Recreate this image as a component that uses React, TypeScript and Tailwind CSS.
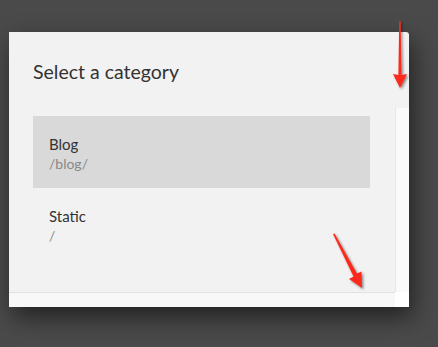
import React from "react";

const items = [
  { name: "Blog", path: "/blog/", active: true },
  { name: "Static", path: "/", active: false },
];

function Arrows() {
  return (
    <svg
      className="pointer-events-none absolute left-0 top-0"
      width="438"
      height="347"
      viewBox="0 0 438 347"
    >
      <defs>
        <filter id="sh" x="-50%" y="-50%" width="200%" height="200%">
          <feDropShadow dx="1.5" dy="1.5" stdDeviation="1.2" floodColor="#000" floodOpacity="0.45" />
        </filter>
      </defs>
      <g fill="#fb2a1c" filter="url(#sh)">
        <polygon points="399.2,21 400.6,21 401.6,75 407,74 400,88 393,74 398.4,75" />
        <polygon points="333,234 334.6,233.4 357,273.5 361.5,271.5 362,288 349,279 353.5,276.5" />
      </g>
    </svg>
  );
}

export default function App() {
  return (
    <div
      className="relative h-[347px] w-[438px] overflow-hidden bg-[#4a4a4a]"
      style={{ fontFamily: "Lato, 'Noto Sans', sans-serif" }}
    >
      <div className="ml-[9px] mt-[32px] flex h-[275px] w-[400px] flex-col rounded-tr-[3px] bg-[#f2f2f2] shadow-[4px_10px_24px_rgba(0,0,0,0.55)]">
        <div className="flex h-[76px] shrink-0 items-center pl-6 pt-[3px]">
          <h2 className="text-[19.5px] leading-none text-[#333]">Select a category</h2>
        </div>
        <div className="flex min-h-0 flex-1">
          <div className="flex-1 pl-6 pr-[25px] pt-2">
            {items.map((it) => (
              <div
                key={it.name}
                className={`flex h-[72px] flex-col justify-center pl-4 pt-[3px] ${
                  it.active ? "bg-[#d9d9d9]" : ""
                }`}
              >
                <span className="text-[15px] leading-[20px] text-[#333]">{it.name}</span>
                <span className="text-[14px] leading-[20px] text-[#888]">{it.path}</span>
              </div>
            ))}
          </div>
          <div className="w-[14px] border-l border-[#e6e6e6] bg-[#fafafa]" />
        </div>
        <div className="flex h-[15px] shrink-0">
          <div className="flex-1 border-t border-[#e2e2e2] bg-[#f8f8f8]" />
          <div className="w-[14px] bg-white" />
        </div>
      </div>
      <Arrows />
    </div>
  );
}
